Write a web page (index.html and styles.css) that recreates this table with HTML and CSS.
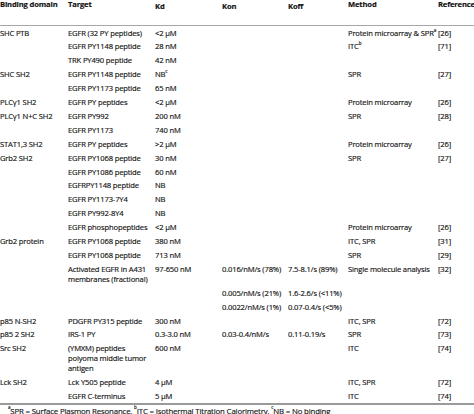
FILE: index.html
```html
<!DOCTYPE html>
<html>
<head>
<meta charset="utf-8">
<link rel="stylesheet" href="styles.css">
</head>
<body>
<div class="page">
<table class="data">
<colgroup>
<col class="c1"><col class="c2"><col class="c3"><col class="c4"><col class="c5"><col class="c6"><col class="c7">
</colgroup>
<thead>
<tr>
<th>Binding domain</th><th>Target</th><th class="k">Kd</th><th class="k">Kon</th><th class="k">Koff</th><th>Method</th><th>Reference</th>
</tr>
</thead>
<tbody>
<tr><td>SHC PTB</td><td>EGFR (32 PY peptides)</td><td>&lt;2 µM</td><td></td><td></td><td>Protein microarray &amp; SPR<sup>a</sup></td><td>[26]</td></tr>
<tr><td></td><td>EGFR PY1148 peptide</td><td>28 nM</td><td></td><td></td><td>ITC<sup>b</sup></td><td>[71]</td></tr>
<tr><td></td><td>TRK PY490 peptide</td><td>42 nM</td><td></td><td></td><td></td><td></td></tr>
<tr><td>SHC SH2</td><td>EGFR PY1148 peptide</td><td>NB<sup>c</sup></td><td></td><td></td><td>SPR</td><td>[27]</td></tr>
<tr><td></td><td>EGFR PY1173 peptide</td><td>65 nM</td><td></td><td></td><td></td><td></td></tr>
<tr><td>PLCγ1 SH2</td><td>EGFR PY peptides</td><td>&lt;2 µM</td><td></td><td></td><td>Protein microarray</td><td>[26]</td></tr>
<tr><td>PLCγ1 N+C SH2</td><td>EGFR PY992</td><td>200 nM</td><td></td><td></td><td>SPR</td><td>[28]</td></tr>
<tr><td></td><td>EGFR PY1173</td><td>740 nM</td><td></td><td></td><td></td><td></td></tr>
<tr><td>STAT1,3 SH2</td><td>EGFR PY peptides</td><td>&gt;2 µM</td><td></td><td></td><td>Protein microarray</td><td>[26]</td></tr>
<tr><td>Grb2 SH2</td><td>EGFR PY1068 peptide</td><td>30 nM</td><td></td><td></td><td>SPR</td><td>[27]</td></tr>
<tr><td></td><td>EGFR PY1086 peptide</td><td>60 nM</td><td></td><td></td><td></td><td></td></tr>
<tr><td></td><td>EGFRPY1148 peptide</td><td>NB</td><td></td><td></td><td></td><td></td></tr>
<tr><td></td><td>EGFR PY1173-7Y4</td><td>NB</td><td></td><td></td><td></td><td></td></tr>
<tr><td></td><td>EGFR PY992-8Y4</td><td>NB</td><td></td><td></td><td></td><td></td></tr>
<tr><td></td><td>EGFR phosphopeptides</td><td>&lt;2 µM</td><td></td><td></td><td>Protein microarray</td><td>[26]</td></tr>
<tr><td>Grb2 protein</td><td>EGFR PY1068 peptide</td><td>380 nM</td><td></td><td></td><td>ITC, SPR</td><td>[31]</td></tr>
<tr><td></td><td>EGFR PY1068 peptide</td><td>713 nM</td><td></td><td></td><td>SPR</td><td>[29]</td></tr>
<tr><td></td><td>Activated EGFR in A431<br>membranes (fractional)</td><td>97-650 nM</td><td>0.016/nM/s (78%)</td><td>7.5-8.1/s (89%)</td><td>Single molecule analysis</td><td>[32]</td></tr>
<tr><td></td><td></td><td></td><td>0.005/nM/s (21%)</td><td>1.6-2.6/s (&lt;11%)</td><td></td><td></td></tr>
<tr><td></td><td></td><td></td><td>0.0022/nM/s (1%)</td><td>0.07-0.4/s (&lt;5%)</td><td></td><td></td></tr>
<tr><td>p85 N-SH2</td><td>PDGFR PY315 peptide</td><td>300 nM</td><td></td><td></td><td>ITC, SPR</td><td>[72]</td></tr>
<tr><td>p85 2 SH2</td><td>IRS-1 PY</td><td>0.3-3.0 nM</td><td>0.03-0.4/nM/s</td><td>0.11-0.19/s</td><td>SPR</td><td>[73]</td></tr>
<tr><td>Src SH2</td><td>(YMXM) peptides<br>polyoma middle tumor<br>antigen</td><td>600 nM</td><td></td><td></td><td>ITC</td><td>[74]</td></tr>
<tr><td>Lck SH2</td><td>Lck Y505 peptide</td><td>4 µM</td><td></td><td></td><td>ITC, SPR</td><td>[72]</td></tr>
<tr class="last"><td></td><td>EGFR C-terminus</td><td>5 µM</td><td></td><td></td><td>ITC</td><td>[74]</td></tr>
</tbody>
</table>
<p class="foot"><sup>a</sup>SPR = Surface Plasmon Resonance, <sup>b</sup>ITC = Isothermal Titration Calorimetry, <sup>c</sup>NB = No binding</p>
</div>
</body>
</html>
```

FILE: styles.css
```css
html, body {
  margin: 0;
  padding: 0;
  background: #fff;
}
body {
  width: 474px;
  height: 414px;
  overflow: hidden;
}
.page {
  font-family: "Open Sans", "Noto Sans", sans-serif;
  font-size: 7.6px;
  letter-spacing: -0.15px;
  color: #111;
  -webkit-text-stroke: 0.15px #111;
}
.data {
  border-collapse: collapse;
  table-layout: fixed;
  width: 500px;
}
.c1 { width: 68px; }
.c2 { width: 87px; }
.c3 { width: 67px; }
.c4 { width: 66px; }
.c5 { width: 60px; }
.c6 { width: 90px; }
.c7 { width: 62px; }
.data th {
  text-align: left;
  vertical-align: top;
  font-weight: 700;
  line-height: 9px;
  height: 25px;
  padding: 0;
  border-bottom: 1px solid #a7a7a7;
  box-sizing: border-box;
}
.data th.k {
  padding-top: 2px;
}
.data td {
  vertical-align: top;
  line-height: 9.9px;
  padding: 3px 0 1px 0;
  white-space: nowrap;
}
.data tr.last td {
  border-bottom: 2px solid #9a9a9a;
}
sup {
  font-size: 4.5px;
  vertical-align: top;
  line-height: 0;
  position: relative;
  top: 1px;
}
.foot {
  margin: 1px 0 0 8px;
  line-height: 10px;
  font-size: 7.8px;
}
```
